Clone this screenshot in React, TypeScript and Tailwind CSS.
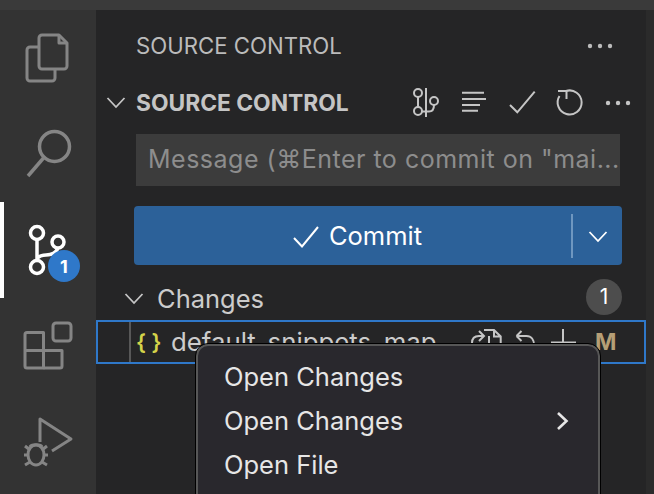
const font = "font-['Inter','Liberation_Sans',sans-serif]";

function Chev({ className = "" }: { className?: string }) {
  return (
    <svg width="20" height="12" viewBox="0 0 20 12" fill="none" stroke="currentColor" strokeWidth="1.8" className={className}>
      <path d="M1.500 1l8.500 9 8.500-9" />
    </svg>
  );
}

function Dots() {
  return (
    <svg width="28" height="8" viewBox="0 0 28 8" fill="currentColor">
      <circle cx="4" cy="4" r="2.200" />
      <circle cx="14" cy="4" r="2.200" />
      <circle cx="24" cy="4" r="2.200" />
    </svg>
  );
}

function ActivityBar() {
  return (
    <div className="w-[96px] shrink-0 flex flex-col bg-[#333333] text-[#858585]">
      <svg width="96" height="96" viewBox="0 0 96 96" fill="none" stroke="currentColor" strokeWidth="3" strokeLinejoin="round">
        <path d="M39 37h-9a3 3 0 0 0-3 3v28a3 3 0 0 0 3 3h22a3 3 0 0 0 3-3v-9" />
        <path d="M42 25h17l8 8v23a3 3 0 0 1-3 3H42a3 3 0 0 1-3-3V28a3 3 0 0 1 3-3z" />
        <path d="M59 25v8h8" />
      </svg>
      <svg width="96" height="96" viewBox="0 0 96 96" fill="none" stroke="currentColor" strokeWidth="3.500">
        <circle cx="54.500" cy="40.500" r="15" />
        <path d="M43.500 52 28 70" />
      </svg>
      <div className="relative h-[96px] border-l-4 border-white">
        <svg className="-ml-1" width="96" height="96" viewBox="0 0 96 96" fill="none" stroke="white" strokeWidth="3.500">
          <circle cx="37" cy="31" r="6.500" />
          <circle cx="58" cy="40" r="6" />
          <circle cx="37" cy="65" r="6.500" />
          <path d="M37 37.500v21M37 57c2-3 6-4 9-4 5 0 10-2 12-7" />
        </svg>
        <div className="absolute left-[44px] top-[48px] w-[32px] h-[32px] rounded-full bg-[#2f78c9] flex items-center justify-center text-white text-[18px] font-bold">
          1
        </div>
      </div>
      <svg width="96" height="96" viewBox="0 0 96 96" fill="none" stroke="currentColor" strokeWidth="3" strokeLinejoin="round">
        <path d="M27 34.500h16.500V70H27a2 2 0 0 1-2-2V36.500a2 2 0 0 1 2-2z" />
        <path d="M25 52.500h37V68a2 2 0 0 1-2 2H43.500" />
        <rect x="53" y="25" width="18" height="18" rx="3" />
      </svg>
      <svg width="96" height="96" viewBox="0 0 96 96" fill="none" stroke="currentColor" strokeWidth="3">
        <path d="M40 48V25l31 20-19 12" strokeLinejoin="round" />
        <ellipse cx="36" cy="61" rx="8" ry="10" />
        <path d="M30 53c1-3 11-3 12 0M25 52l5 4M47 52l-5 4M24 61h4M44 61h4M25 71l5-3M47 71l-5-3" />
      </svg>
    </div>
  );
}

function ScmIcons() {
  return (
    <div className="flex items-center text-[#c5c5c5]">
      <svg width="48" height="32" viewBox="0 0 48 32" fill="none" stroke="currentColor" strokeWidth="2">
        <circle cx="16" cy="6" r="4" />
        <circle cx="16" cy="24" r="4" />
        <circle cx="32" cy="14" r="4" />
        <path d="M16 10v10M24 1v29M20 24.500h7c4 0 5-3 5-6.500" />
      </svg>
      <svg width="48" height="32" viewBox="0 0 48 32" fill="none" stroke="currentColor" strokeWidth="2">
        <path d="M12 5.700h22M12 12h24M12 18h18M12 23.700h16" />
      </svg>
      <svg width="48" height="32" viewBox="0 0 48 32" fill="none" stroke="currentColor" strokeWidth="2">
        <path d="M12 18l7.300 7.300L36.700 4.700" />
      </svg>
      <svg width="48" height="32" viewBox="0 0 48 32" fill="none" stroke="currentColor" strokeWidth="2">
        <path d="M20 4a12 12 0 1 1-6.500 5" />
        <path d="M12 4h8.500v8" />
      </svg>
      <div className="w-[48px] flex justify-center">
        <Dots />
      </div>
    </div>
  );
}

function MenuItem({ label, sub }: { label: string; sub?: boolean }) {
  return (
    <div className="h-[44px] pl-[26px] pr-[29px] flex items-center justify-between text-[25.5px] text-[#e6e6e6]">
      <span>{label}</span>
      {sub && (
        <svg width="13" height="20" viewBox="0 0 13 20" fill="none" stroke="currentColor" strokeWidth="2.600">
          <path d="M2 2l8.500 8L2 18" />
        </svg>
      )}
    </div>
  );
}

export default function App() {
  return (
    <div className={`${font} w-[654px] h-[494px] overflow-hidden relative flex flex-col bg-[#1e1e1e]`}>
      <div className="h-[10px] bg-[#3a3a3a]" />
      <div className="flex flex-1 min-h-0">
        <ActivityBar />
        <div className="w-[550px] shrink-0 bg-[#252526] flex flex-col">
          {/* Title */}
          <div className="h-[72px] pl-[40px] pr-[32px] flex items-center justify-between text-[#bbbbbb] text-[22.2px]">
            <span>SOURCE CONTROL</span>
            <Dots />
          </div>
          {/* Section header */}
          <div className="h-[42px] pl-[10px] pr-[4px] flex items-center justify-between text-[#c5c5c5]">
            <div className="flex items-center gap-[10px]">
              <Chev />
              <span className="text-[22.8px] font-bold">SOURCE CONTROL</span>
            </div>
            <ScmIcons />
          </div>
          {/* Message input */}
          <div className="ml-[40px] mr-[26px] mt-[10px] h-[52px] bg-[#3c3c3c] pl-[12px] flex items-center text-[25px] tracking-[0.5px] text-[#8d8d8d] overflow-hidden whitespace-nowrap">
            Message (⌘Enter to commit on "mai...
          </div>
          {/* Commit button */}
          <div className="ml-[38px] mr-[24px] mt-[20px] h-[59px] rounded-[4px] bg-[#2c6199] flex items-center text-white">
            <div className="flex-1 flex items-center justify-center gap-[10px] text-[25.5px] pt-[2px] pl-[10px]">
              <svg width="26" height="22" viewBox="0 0 26 22" fill="none" stroke="currentColor" strokeWidth="2">
                <path d="M1 12l8 8.500L25 1" />
              </svg>
              <span>Commit</span>
            </div>
            <div className="w-[2px] h-[44px] bg-[#6f97c0]" />
            <div className="w-[49px] flex items-center justify-center pt-[2px]">
              <Chev />
            </div>
          </div>
          {/* Changes */}
          <div className="h-[45px] mt-[10px] pl-[28px] pr-[24px] flex items-center justify-between text-[#cccccc]">
            <div className="flex items-center gap-[13px] pt-[3px]">
              <Chev className="text-[#c5c5c5]" />
              <span className="text-[25.5px]">Changes</span>
            </div>
            <div className="w-[36px] h-[36px] rounded-full bg-[#4d4d4d] text-white text-[21px] flex items-center justify-center -mt-[1px]">
              1
            </div>
          </div>
          {/* File row */}
          <div className="h-[44px] border-2 border-[#2f78c9] flex items-center text-[#cccccc]">
            <div className="ml-[31px] w-[2px] h-full bg-[#585858]" />
            <span className="ml-[5px] w-[25px] text-[#d4d44a] text-[22px] font-semibold whitespace-nowrap">{"{ }"}</span>
            <span className="ml-[10px] text-[25.8px] pt-[1px] whitespace-nowrap">default_snippets_map</span>
            <div className="ml-auto flex items-center text-[#c5c5c5]">
              <svg width="110" height="40" viewBox="0 0 110 40" fill="none" stroke="currentColor" strokeWidth="2">
                <path d="M3 21c0-5 3-7 7-7h5M10 9l5 5-5 5" />
                <path d="M15 8h10l6.700 6.500V24M25 8v6.500h6.700M20 14v10" />
                <path d="M47.500 14h10c5 0 7.500 4 7.500 9M47.500 14l5-5M47.500 14l5 5" />
                <path d="M94 7v16M82 20.500h25" />
              </svg>
              <span className="w-[20px] ml-[16px] mr-[29px] text-[#b69f76] text-[23px] font-bold">M</span>
            </div>
          </div>
        </div>
        <div className="flex-1 bg-[#2b2b2b]" />
      </div>
      {/* Context menu */}
      <div className="absolute left-[196px] top-[344px] w-[404px] h-[170px] rounded-[12px] bg-[#29282d] border-2 border-[#575757] outline-1 outline-black pt-[9px]">
        <MenuItem label="Open Changes" />
        <MenuItem label="Open Changes" sub />
        <MenuItem label="Open File" />
      </div>
    </div>
  );
}
